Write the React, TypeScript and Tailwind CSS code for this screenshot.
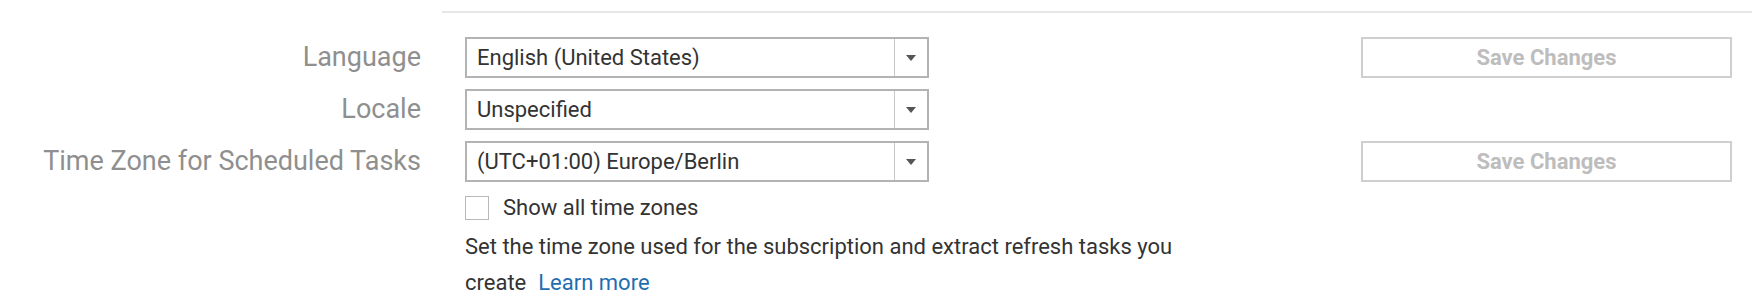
import { useState } from 'react'

function Select({ value }: { value: string }) {
  return (
    <div className="flex h-[41px] w-[464px] items-stretch border-2 border-[#b3b3b3] bg-white">
      <div className="flex flex-1 items-center pl-[10px] text-[22px] text-[#333]">{value}</div>
      <div className="flex w-[33px] items-center justify-center border-l border-[#c8c8c8]">
        <svg width="10" height="6" viewBox="0 0 10 6">
          <path d="M0 0h10L5 6z" fill="#555" />
        </svg>
      </div>
    </div>
  )
}

function SaveButton() {
  return (
    <button
      disabled
      className="h-[41px] w-[371px] border-2 border-[#cfcfcf] bg-white text-[22px] font-bold text-[#bdbdbd]"
    >
      Save Changes
    </button>
  )
}

function Row({ label, children }: { label: string; children: React.ReactNode }) {
  return (
    <div className="flex items-center">
      <div className="w-[421px] text-right text-[27px] text-[#8f8f8f]">{label}</div>
      <div className="ml-[44px] flex items-center">{children}</div>
    </div>
  )
}

export default function App() {
  const [showAll, setShowAll] = useState(false)

  return (
    <div className="h-[302px] w-[1754px] bg-white pt-[11px]" style={{ fontFamily: 'Roboto, "Liberation Sans", sans-serif' }}>
      <div className="ml-[442px] mr-[2px] h-[2px] bg-[#e6e6e6]" />

      <div className="mt-[24px] flex flex-col gap-[11px]">
        <Row label="Language">
          <Select value="English (United States)" />
          <div className="ml-[432px]">
            <SaveButton />
          </div>
        </Row>
        <Row label="Locale">
          <Select value="Unspecified" />
        </Row>
        <Row label="Time Zone for Scheduled Tasks">
          <Select value="(UTC+01:00) Europe/Berlin" />
          <div className="ml-[432px]">
            <SaveButton />
          </div>
        </Row>
      </div>

      <div className="ml-[465px] mt-[9px]">
        <label className="flex items-center gap-[14px] text-[22px] text-[#333]">
          <input
            type="checkbox"
            checked={showAll}
            onChange={e => setShowAll(e.target.checked)}
            className="h-[24px] w-[24px] appearance-none border border-[#b8b8b8] bg-white"
          />
          Show all time zones
        </label>
        <p className="mt-[5px] w-[740px] text-[22px] leading-[36px] text-[#333]">
          Set the time zone used for the subscription and extract refresh tasks you create
          <a href="#" className="ml-[12px] text-[#1f6eb0]">Learn more</a>
        </p>
      </div>
    </div>
  )
}
